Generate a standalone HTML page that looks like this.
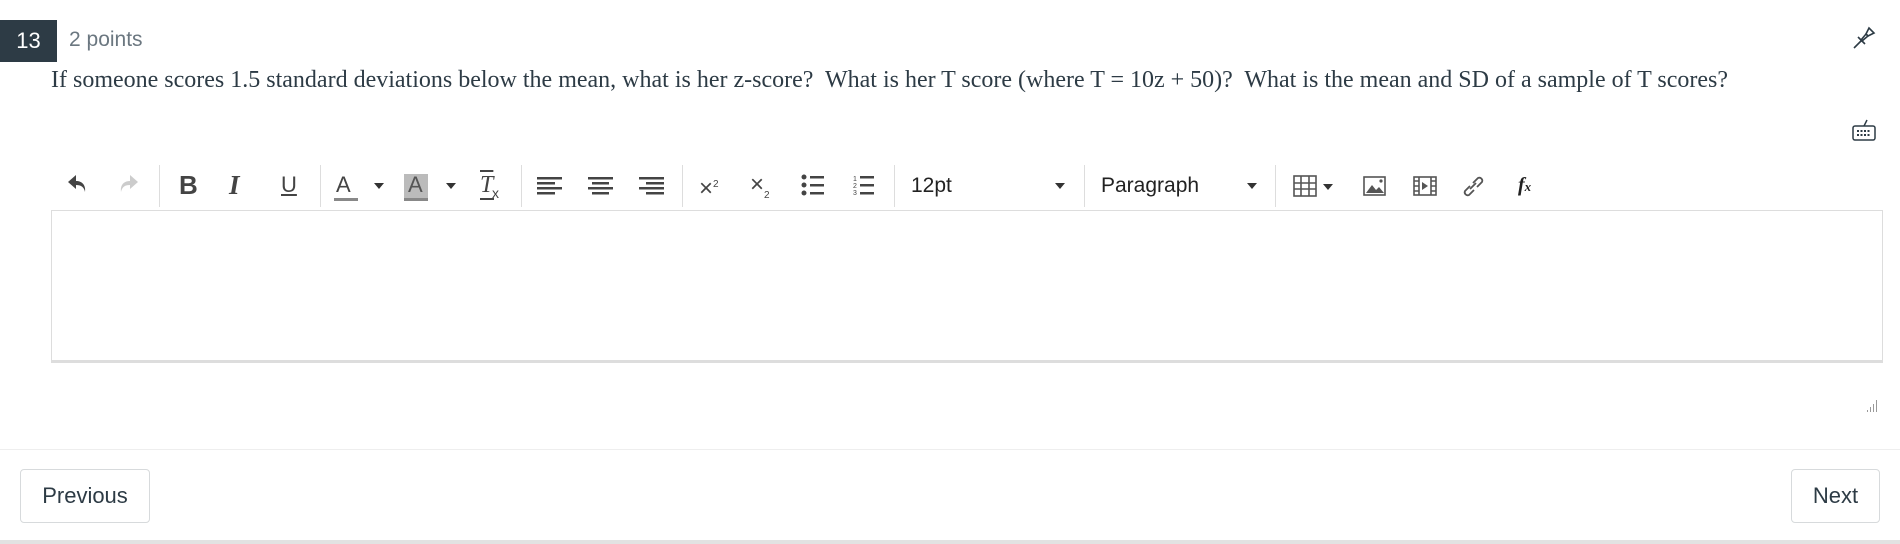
<!DOCTYPE html>
<html><head><meta charset="utf-8"><style>
body{margin:0;width:1900px;height:544px;background:#fff;position:relative;overflow:hidden;font-family:"Liberation Sans",sans-serif;color:#2d3b45}
.a{position:absolute}
.badge{left:0;top:20px;width:57px;height:42px;background:#2d3b45;color:#fff;font-size:22px;line-height:42px;text-align:center}
.pts{left:69px;top:26px;font-size:21px;color:#6b7780;line-height:28px}
.q{left:51px;top:65px;font-family:"Liberation Serif",serif;font-size:24px;color:#2d3b45;white-space:pre;line-height:30px}
.sep{width:1px;height:42px;top:165px;background:#ddd}
.ic{color:#555;font-size:24px;line-height:30px;top:170px}
.tri{width:0;height:0;border-left:5px solid transparent;border-right:5px solid transparent;border-top:6px solid #333;top:183px}
.tt{font-size:21px;color:#222;top:172px;line-height:28px}
.ed{left:51px;top:210px;width:1830px;height:149px;border:1px solid #ddd;border-bottom:3px solid #ddd}
.btn{top:469px;height:52px;border:1px solid #d7dadc;border-radius:4px;background:#fff;font-size:22px;line-height:52px;text-align:center;color:#2d3b45}
</style></head><body>
<div class="a badge">13</div>
<div class="a pts">2 points</div>
<div class="a q">If someone scores 1.5 standard deviations below the mean, what is her z-score?  What is her T score (where T = 10z + 50)?  What is the mean and SD of a sample of T scores?</div>
<svg class="a" style="left:1852px;top:24px" width="26" height="26" viewBox="0 0 26 26" fill="none" stroke="#2d3b45" stroke-width="1.6"><path d="M2 24l7-7"/><path d="M6 13l7 7"/><path d="M9 16l5-6 2 2-6 5z"/><path d="M14 10l3-6 5 5-6 3z"/></svg>
<svg class="a" style="left:1851px;top:118px" width="26" height="24" viewBox="0 0 26 24" fill="none" stroke="#2d3b45" stroke-width="1.5"><path d="M13 8l3-6"/><rect x="2" y="8" width="22" height="14" rx="2"/><path d="M6 13h14M6 17h14" stroke-dasharray="2 1.5" stroke-width="2"/></svg>

<svg class="a" style="left:66px;top:173px" width="24" height="22" viewBox="0 0 24 22"><path d="M10 2L2 9l8 7v-4c5 0 8 2 9 7 1-7-3-11-9-11z" fill="#444"/></svg>
<svg class="a" style="left:116px;top:173px" width="24" height="22" viewBox="0 0 24 22"><path d="M14 2l8 7-8 7v-4c-5 0-8 2-9 7-1-7 3-11 9-11z" fill="#ccc"/></svg>
<div class="a sep" style="left:159px"></div>
<div class="a ic" style="left:179px;font-weight:bold;color:#444;font-size:26px">B</div>
<div class="a ic" style="left:229px;font-family:'Liberation Serif',serif;font-style:italic;font-weight:bold;color:#444;font-size:27px">I</div>
<div class="a ic" style="left:281px;color:#444;text-decoration:underline;font-size:22px">U</div>
<div class="a sep" style="left:320px"></div>
<div class="a ic" style="left:336px;font-size:22px;color:#444">A</div>
<div class="a" style="left:334px;top:198px;width:24px;height:3px;background:#888"></div>
<div class="a tri" style="left:374px"></div>
<div class="a" style="left:404px;top:174px;width:24px;height:27px;background:#bbb"></div>
<div class="a ic" style="left:408px;font-size:22px;color:#555">A</div>
<div class="a" style="left:404px;top:198px;width:24px;height:3px;background:#888"></div>
<div class="a tri" style="left:446px"></div>
<div class="a ic" style="left:480px;font-family:'Liberation Serif',serif;font-style:italic;color:#444;text-decoration:overline">T</div>
<div class="a" style="left:480px;top:198px;width:14px;height:2px;background:#444"></div>
<div class="a" style="left:492px;top:185px;font-size:14px;color:#444">x</div>
<div class="a sep" style="left:521px"></div>
<svg class="a" style="left:537px;top:174px" width="130" height="24" viewBox="0 0 130 24" fill="#444"><g><rect x="0" y="3" width="25" height="2.5"/><rect x="0" y="8" width="18" height="2.5"/><rect x="0" y="13" width="25" height="2.5"/><rect x="0" y="18" width="18" height="2.5"/></g><g transform="translate(51)"><rect x="0" y="3" width="25" height="2.5"/><rect x="4" y="8" width="17" height="2.5"/><rect x="0" y="13" width="25" height="2.5"/><rect x="4" y="18" width="17" height="2.5"/></g><g transform="translate(102)"><rect x="0" y="3" width="25" height="2.5"/><rect x="7" y="8" width="18" height="2.5"/><rect x="0" y="13" width="25" height="2.5"/><rect x="7" y="18" width="18" height="2.5"/></g></svg>
<div class="a sep" style="left:682px"></div>
<div class="a ic" style="left:699px;font-size:24px;color:#444">×<sup style="font-size:10px">2</sup></div>
<div class="a ic" style="left:750px;font-size:24px;color:#444">×<sub style="font-size:10px">2</sub></div>
<svg class="a" style="left:801px;top:173px" width="80" height="26" viewBox="0 0 80 26" fill="#444"><circle cx="3" cy="4" r="2.5"/><circle cx="3" cy="12" r="2.5"/><circle cx="3" cy="20" r="2.5"/><rect x="9" y="3" width="14" height="2.5"/><rect x="9" y="11" width="14" height="2.5"/><rect x="9" y="19" width="14" height="2.5"/><text x="52" y="8" font-size="7" font-family="Liberation Sans">1</text><text x="52" y="15" font-size="7" font-family="Liberation Sans">2</text><text x="52" y="22" font-size="7" font-family="Liberation Sans">3</text><rect x="59" y="3" width="14" height="2.5"/><rect x="59" y="11" width="14" height="2.5"/><rect x="59" y="19" width="14" height="2.5"/></svg>
<div class="a sep" style="left:894px"></div>
<div class="a tt" style="left:911px">12pt</div>
<div class="a tri" style="left:1055px"></div>
<div class="a sep" style="left:1084px"></div>
<div class="a tt" style="left:1101px">Paragraph</div>
<div class="a tri" style="left:1247px"></div>
<div class="a sep" style="left:1275px"></div>
<svg class="a" style="left:1293px;top:174px" width="250" height="24" viewBox="0 0 250 24" fill="none" stroke="#555" stroke-width="1.6"><rect x="1" y="2" width="22" height="20"/><path d="M1 9h22M1 15h22M8 2v20M16 2v20"/><path d="M30 10h10l-5 6z" fill="#333" stroke="none"/><rect x="71" y="3" width="21" height="18"/><path d="M73 19l6-8 4 5 3-3 5 6z" fill="#555" stroke="none"/><circle cx="88" cy="7" r="1.6" fill="#555" stroke="none"/><rect x="121" y="3" width="22" height="18"/><path d="M126 3v18M138 3v18" /><path d="M129 8l6 4-6 4z" fill="#555" stroke="none"/><path d="M121 7h5M121 12h5M121 17h5M138 7h5M138 12h5M138 17h5"/><path d="M177 12l-5 5a3 3 0 0 0 4 4l5-5M180 9l5-5a3 3 0 0 1 4 4l-5 5M177 15l6-6" stroke-width="1.8"/></svg>
<div class="a" style="left:1518px;top:174px;font-family:'Liberation Serif',serif;font-weight:bold;font-style:italic;font-size:20px;color:#222">f<span style="font-size:13px">x</span></div>

<div class="a ed"></div>
<svg class="a" style="left:1866px;top:400px" width="12" height="12" viewBox="0 0 12 12" fill="#999"><rect x="10" y="0" width="1" height="12"/><rect x="7" y="4" width="1" height="8"/><rect x="4" y="7" width="1" height="5"/><rect x="1" y="10" width="1" height="2"/></svg>
<div class="a" style="left:0;top:449px;width:1900px;height:1px;background:#eee"></div>
<div class="a btn" style="left:20px;width:128px">Previous</div>
<div class="a btn" style="left:1791px;width:87px">Next</div>
<div class="a" style="left:0;top:540px;width:1900px;height:4px;background:#e2e2e2"></div>
</body></html>
